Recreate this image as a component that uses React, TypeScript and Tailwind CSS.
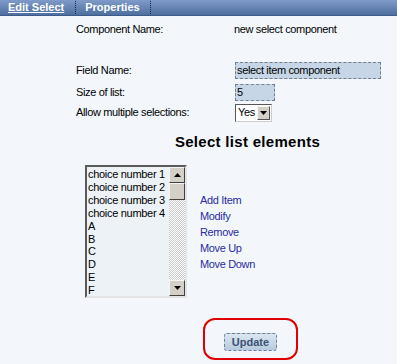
import React from 'react';

const choices = ['choice number 1', 'choice number 2', 'choice number 3', 'choice number 4', 'A', 'B', 'C', 'D', 'E', 'F'];
const actions = ['Add Item', 'Modify', 'Remove', 'Move Up', 'Move Down'];

const Arrow = ({ down }: { down?: boolean }) => (
  <svg width="7" height="4" viewBox="0 0 7 4">
    <polygon points={down ? '0,0 7,0 3.5,4' : '0,4 7,4 3.5,0'} fill="#000" />
  </svg>
);

const ScrollBtn = ({ down }: { down?: boolean }) => (
  <div className="w-[16px] h-[16px] bg-[#d4d0c8] border border-t-[#f4f4f4] border-l-[#f4f4f4] border-r-[#404040] border-b-[#404040] flex items-center justify-center">
    <Arrow down={down} />
  </div>
);

const Row = ({ label, children }: { label: string; children: React.ReactNode }) => (
  <div className="flex items-center h-[17px]">
    <div className="w-[159px]">{label}</div>
    {children}
  </div>
);

export default function App() {
  return (
    <div className="w-[397px] h-[364px] bg-[#f3f7fb] text-[11px] tracking-[-0.35px] text-black font-['Liberation_Sans',Arial,sans-serif] overflow-hidden">
      {/* tabs */}
      <div className="h-[16px] bg-gradient-to-b from-[#7f9bc9] to-[#4f6f9f] border-b border-[#3d5a88] flex items-center pl-[8px] text-white font-bold tracking-normal">
        <span className="underline underline-offset-[1px]">Edit Select</span>
        <span className="ml-[11px] h-[13px] border-l border-dotted border-[#14223c]" />
        <span className="ml-[9px]">Properties</span>
        <span className="ml-[10px] h-[13px] border-l border-dotted border-[#14223c]" />
      </div>

      <div className="pl-[76px]">
        <div className="flex items-center h-[14px] mt-[6px]">
          <div className="w-[158px]">Component Name:</div>
          <div>new select component</div>
        </div>

        <div className="mt-[26px]">
          <Row label="Field Name:">
            <div className="w-[146px] h-[17px] bg-[#c6d6e6] border border-dashed border-[#6f7f90] pl-[1px] leading-[15px]">select item component</div>
          </Row>
        </div>
        <div className="mt-[5px]">
          <Row label="Size of list:">
            <div className="w-[40px] h-[17px] bg-[#c6d6e6] border border-dashed border-[#6f7f90] pl-[1px] leading-[15px]">5</div>
          </Row>
        </div>
        <div className="mt-[3px]">
          <Row label="Allow multiple selections:">
            <div className="w-[37px] h-[18px] bg-white border border-t-[#555] border-l-[#555] border-r-[#ccc] border-b-[#ccc] flex items-center">
              <span className="flex-1 pl-[2px]">Yes</span>
              <div className="w-[13px] h-[14px] mr-[1px] bg-[#d4d0c8] border border-t-[#f4f4f4] border-l-[#f4f4f4] border-r-[#505050] border-b-[#505050] flex items-center justify-center">
                <Arrow down />
              </div>
            </div>
          </Row>
        </div>
      </div>

      <div className="pl-[98px] mt-[12px] text-center text-[15px] font-bold leading-[18px] tracking-[0.3px]">Select list elements</div>

      <div className="flex items-center ml-[85px] mt-[14px]">
        <div className="w-[102px] h-[133px] bg-[#edf2f7] border-2 border-t-[#5a5a5a] border-l-[#5a5a5a] border-r-[#e4e4e4] border-b-[#e4e4e4] flex">
          <div className="flex-1 pl-[1px] pt-[1px] text-[11px] leading-[12.9px] tracking-[-0.3px]">
            {choices.map((c) => (
              <div key={c}>{c}</div>
            ))}
          </div>
          <div className="w-[16px] flex flex-col bg-[repeating-conic-gradient(#c8c8c8_0%_25%,#ffffff_0%_50%)] bg-[length:2px_2px]">
            <ScrollBtn />
            <div className="w-[16px] h-[17px] bg-[#d4d0c8] border border-t-[#f4f4f4] border-l-[#f4f4f4] border-r-[#404040] border-b-[#404040]" />
            <div className="flex-1" />
            <ScrollBtn down />
          </div>
        </div>
        <div className="ml-[13px] flex flex-col text-[#2a2aa6] leading-[16px]">
          {actions.map((a) => (
            <span key={a}>{a}</span>
          ))}
        </div>
      </div>

      <div className="ml-[203px] mt-[20px] w-[95px] h-[42px] border-2 border-[#e00000] rounded-[12px] flex justify-center pt-[13px]">
        <button className="w-[53px] h-[18px] bg-gradient-to-b from-[#dbe6f1] to-[#b8cadd] border border-dashed border-[#6a7f98] rounded-[3px] text-[#3b5274] font-bold text-[11px] tracking-normal leading-none">
          Update
        </button>
      </div>
    </div>
  );
}
